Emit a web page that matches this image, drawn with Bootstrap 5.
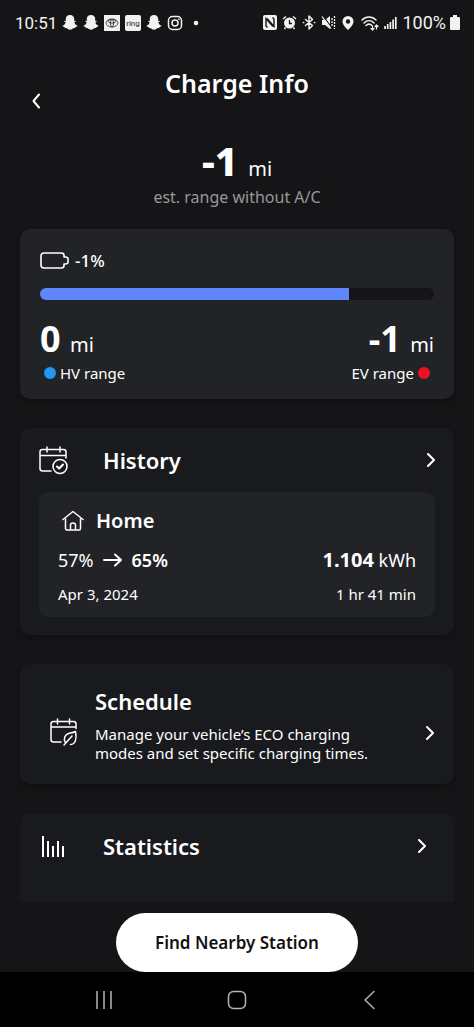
<!DOCTYPE html>
<html lang="en">
<head>
<meta charset="utf-8">
<meta name="viewport" content="width=device-width, initial-scale=1">
<title>Charge Info</title>
<link rel="stylesheet" href="https://cdn.jsdelivr.net/npm/bootstrap@5.3.0/dist/css/bootstrap.min.css">
<style>
  body { background: #151517; color: #fff; font-family: "Noto Sans", "Open Sans", sans-serif; font-size: 16px; line-height: 24px; }
  svg { display: block; flex: none; }
  .line { fill: none; stroke: currentColor; stroke-width: 2; stroke-linecap: round; stroke-linejoin: round; }
  .status-bar { height: 45px; padding: 0 14px 0 15px; font-family: Roboto, sans-serif; font-size: 18px; color: #f2f2f2; }
  .status-left { gap: 5px; font-size: 17px; }
  .status-right { gap: 5px; }
  .page-head { display: grid; grid-template-columns: 40px 1fr 40px; padding: 0 16px; height: 76px; }
  .page-head h1 { font-size: 25px; line-height: 36px; font-weight: 600; padding-top: 20px; }
  .back-btn { height: 40px; margin-top: 36px; }
  .range-total { font-size: 40px; line-height: 48px; font-weight: 800; margin-top: 16px; }
  .range-value { font-size: 36px; line-height: 45px; font-weight: 700; }
  .unit { font-size: 20px; line-height: 20px; font-weight: 400; }
  .sub-text { font-size: 16px; line-height: 24px; color: #98989b; }
  .panel { border-radius: 10px; background: #191a1d; box-shadow: 0 3px 5px #101012; }
  .panel-light { background: #222326; }
  .range-panel { padding: 20px 20px 14px; margin-top: 20px; }
  .charge-pct { font-size: 17px; font-weight: 500; line-height: 23px; gap: 6px; }
  .charge-bar { --bs-progress-bg: #151517; --bs-progress-bar-bg: #5f86fb; height: 12px; border-radius: 6px; margin: 16px 0; }
  .dot { width: 12px; height: 12px; border-radius: 50%; flex: none; }
  .dot-hv { background: #2196f3; }
  .dot-ev { background: #ed1021; }
  .body-text { font-size: 15px; }
  .history-panel { padding: 0 19px 18px; }
  .panel-head { height: 64px; color: #fff; }
  .panel-title { font-size: 22px; line-height: 30px; font-weight: 600; }
  .icon-col { width: 64px; }
  .session { border-radius: 10px; padding: 12px 19px 11px; }
  .session-name { font-size: 20px; font-weight: 600; height: 34px; gap: 12px; }
  .session-data { height: 44px; font-size: 18px; }
  .energy { font-size: 20px; }
  .schedule-panel { padding: 22px 20px 21px 30px; }
  .schedule-panel .icon-col { width: 45px; }
  .schedule-text { line-height: 19px; margin-top: 9px; }
  .stats-panel { padding: 0 28px 23px 21px; border-radius: 10px 10px 0 0; box-shadow: none; }
  .stats-panel .panel-head { height: 66px; }
  .stats-panel .icon-col { width: 62px; }
  .stack { gap: 29px; padding: 0 20px; }
  .find-btn { --bs-btn-color: #111; --bs-btn-bg: #fff; --bs-btn-hover-bg: #e6e6e6; --bs-btn-hover-color: #111; font-size: 17px; font-weight: 600; line-height: 25px; padding: 16px 38px; }
  .system-nav { height: 55px; background: #000; color: #b5b5b5; gap: 89px; }
  .system-nav .btn { color: inherit; }
</style>
</head>
<body>
<div class="d-flex flex-column min-vh-100">

  <div class="status-bar d-flex align-items-center justify-content-between">
    <div class="status-left d-flex align-items-center">
      <span>10:51</span>
      <svg width="16" height="17" viewBox="0 0 16 17" fill="currentColor"><path id="ghost" d="M8 1c3 0 4.200 2 4.200 4v2l1.300-.3c.6.6-.3 1.200-1.200 1.700.5 1.600 1.600 2.700 3.200 3.200.1.900-1 1.100-1.900 1.300l-.5 1.200c-1.200-.3-2 .1-2.900.8-1.400 1.100-3 1.100-4.400 0-.9-.7-1.700-1.100-2.900-.8l-.5-1.200c-.9-.2-2-.4-1.900-1.300 1.600-.5 2.700-1.600 3.200-3.200C2.800 7.900 1.900 7.300 2.500 6.700L3.800 7V5c0-2 1.200-4 4.200-4z"/></svg>
      <svg width="16" height="17" viewBox="0 0 16 17" fill="currentColor"><use href="#ghost"/></svg>
      <svg width="16" height="16" viewBox="0 0 16 16"><path fill="#f2f2f2" d="M0 0h16v16H0z"/><g fill="none" stroke="#333" stroke-width=".9"><ellipse cx="8" cy="8" rx="6" ry="4"/><ellipse cx="8" cy="6.300" rx="4" ry="1.800"/><ellipse cx="8" cy="8" rx="1.500" ry="4"/></g></svg>
      <svg width="16" height="16" viewBox="0 0 16 16"><rect width="16" height="16" rx="2" fill="#f2f2f2"/><text x="8" y="11" text-anchor="middle" font-family="Roboto, sans-serif" font-size="8" fill="#222">ring</text></svg>
      <svg width="16" height="17" viewBox="0 0 16 17" fill="currentColor"><use href="#ghost"/></svg>
      <svg width="16" height="16" viewBox="0 0 16 16" class="line"><rect x="1.500" y="1.500" width="13" height="13" rx="4" stroke-width="1.500"/><circle cx="8" cy="8" r="3" stroke-width="1.500"/><circle cx="11.800" cy="4.200" r=".4" stroke-width="1"/></svg>
      <svg width="16" height="16" viewBox="0 0 16 16" fill="currentColor"><circle cx="8" cy="8" r="2.300"/></svg>
    </div>
    <div class="status-right d-flex align-items-center">
      <svg width="14" height="15" viewBox="0 0 14 15"><rect width="14" height="15" rx="2" fill="#f2f2f2"/><path d="M4.500 12.500 3 11V3.500l7 8M9.500 2.500 11 4v7.500l-7-8" fill="none" stroke="#151517" stroke-width="1.400"/></svg>
      <svg width="15" height="15" viewBox="0 0 15 15"><circle cx="7.500" cy="8" r="5.500" fill="#f2f2f2"/><path d="M1 4l3-2.500M14 4l-3-2.500M3.500 12.500 2.500 14M11.500 12.500l1 1.500" stroke="#f2f2f2" stroke-width="1.500"/><path d="M7.500 5v3.500H10" fill="none" stroke="#151517" stroke-width="1.300"/></svg>
      <svg width="14" height="15" viewBox="0 0 14 15" class="line"><path stroke-width="1.500" d="M3.500 4.500l7 6L7 14V1l3.500 3.500-7 6"/><path stroke-width="1.700" d="M1.500 7.500h.1M12.500 7.500h.1"/></svg>
      <svg width="15" height="15" viewBox="0 0 15 15"><path d="M1 5h3l5-4v13l-5-4H1z" fill="#f2f2f2"/><path d="M2 .5l8.500 12" stroke="#151517" stroke-width="1.200"/><path d="M1 1.500l9 12" stroke="#f2f2f2" stroke-width="1.200"/><path d="M11 3v9M13.500 1v13" stroke="#f2f2f2" stroke-width="1.300" stroke-dasharray="2 1"/></svg>
      <svg width="14" height="16" viewBox="0 0 14 16"><path fill="#f2f2f2" fill-rule="evenodd" d="M7 1a5.500 5.500 0 0 1 5.500 5.500C12.500 10.500 7 15 7 15S1.500 10.500 1.500 6.500A5.500 5.500 0 0 1 7 1zm0 3.300a2.200 2.200 0 1 0 0 4.400 2.200 2.200 0 0 0 0-4.400z"/></svg>
      <svg width="19" height="16" viewBox="0 0 19 16" class="line"><g stroke-width="1.500"><path d="M2 5c4-4 10-4 14 0M4 8c3-3 7-3 10 0M6 10.500c2-1.800 4-1.800 6 0"/><path stroke-width="1.200" d="M12.500 11v4m-1.500-1.500 1.500 1.500 1.500-1.500M16.500 14v-4M15 11.500l1.500-1.500 1.500 1.500"/></g></svg>
      <svg width="13" height="15" viewBox="0 0 13 15" stroke="#f2f2f2" stroke-width="1.700"><path d="M1 14v-3M3.700 14V9M6.400 14V7M9.100 14V4.500M11.800 14V2"/></svg>
      <span class="d-flex align-items-center"><span>100%</span><svg class="ms-1" width="10" height="15" viewBox="0 0 10 15" fill="#f2f2f2"><path d="M3 0h4v2h2q1 0 1 1v11q0 1-1 1H1q-1 0-1-1V3q0-1 1-1h2z"/></svg></span>
    </div>
  </div>

  <header class="page-head">
    <button type="button" class="back-btn btn border-0 p-0 text-white d-flex justify-content-center align-items-center" aria-label="Back"><svg width="12" height="18" viewBox="0 0 12 18" class="line"><path d="M9 2.500 3.500 9 9 15.500"/></svg></button>
    <h1 class="m-0 text-center">Charge Info</h1>
  </header>

  <main class="flex-grow-1">
    <section class="text-center">
      <div class="range-total">-1 <span class="unit">mi</span></div>
      <div class="sub-text">est. range without A/C</div>
    </section>

    <div class="stack d-flex flex-column">
      <section class="panel panel-light range-panel">
        <div class="charge-pct d-flex align-items-center">
          <svg width="29" height="17" viewBox="0 0 29 17" class="line"><path stroke-width="1.600" d="M4 1h17.500q2.500 0 2.500 2.500v1.500h1.500q2.500 0 2.500 2v3q0 2-2.500 2H24v1.500q0 2.500-2.500 2.500H4q-3 0-3-3V4q0-3 3-3z"/></svg>
          <span>-1%</span>
        </div>
        <div class="charge-bar progress" role="progressbar" aria-label="Charge" aria-valuenow="78" aria-valuemin="0" aria-valuemax="100"><div class="progress-bar" style="width:78.400%"></div></div>
        <div class="d-flex justify-content-between">
          <div>
            <div class="range-value">0 <span class="unit">mi</span></div>
            <div class="body-text d-flex align-items-center ps-1 gap-1"><span class="dot dot-hv"></span>HV range</div>
          </div>
          <div class="text-end">
            <div class="range-value">-1 <span class="unit">mi</span></div>
            <div class="body-text d-flex align-items-center justify-content-end pe-1 gap-1">EV range<span class="dot dot-ev"></span></div>
          </div>
        </div>
      </section>

      <section class="panel history-panel">
        <a href="#history" class="panel-head d-flex align-items-center text-decoration-none">
          <span class="icon-col"><svg width="29" height="29" viewBox="0 0 29 29" class="line"><g stroke-width="1.500"><path d="M12 25H3.500Q1 25 1 22.500V6q0-2.500 2.500-2.500h21Q27 3.500 27 6v6M1 9.500h26M8 1v5M21 1v5"/><circle cx="21" cy="20.500" r="7"/><path stroke-width="2" d="M18 20.500l2.200 2 3.800-4"/></g></svg></span>
          <h2 class="panel-title m-0 flex-grow-1">History</h2>
          <svg width="10" height="18" viewBox="0 0 10 18" class="line"><path d="M3 3 9 9l-6 6"/></svg>
        </a>
        <div class="session panel-light">
          <div class="session-name d-flex align-items-center"><svg class="ms-1" width="22" height="22" viewBox="0 0 22 22" class="line"><g fill="none" stroke="currentColor" stroke-width="1.500" stroke-linecap="round" stroke-linejoin="round"><path d="M1 9.500 11 1.500l10 8M3.500 9v9.500q0 1.500 1.500 1.500h12q1.500 0 1.500-1.500V9M8.500 20v-5q0-2 2.500-2t2.500 2v5"/></g></svg>Home</div>
          <div class="session-data d-flex align-items-center justify-content-between">
            <span class="d-flex align-items-center">57%<svg class="mx-2" width="22" height="18" viewBox="0 0 22 18"><path class="line" d="M2 9h17M13 3.500 19 9l-6 5.500"/></svg><span class="fw-semibold">65%</span></span>
            <span><span class="energy fw-bold">1.104</span> kWh</span>
          </div>
          <div class="body-text d-flex justify-content-between"><span>Apr 3, 2024</span><span>1 hr 41 min</span></div>
        </div>
      </section>

      <a href="#schedule" class="panel schedule-panel d-flex align-items-center text-decoration-none text-white">
        <span class="icon-col mt-3"><svg width="28" height="29" viewBox="0 0 28 29" class="line"><g stroke-width="1.500"><path d="M11 24H3.500Q1 24 1 21.500V6q0-2.500 2.500-2.500h20Q26 3.500 26 6v4.500M1 9h25M7.500 1v5M19.500 1v5"/><path d="M14 27l8-9M15.500 25c-2.500-4-1-9 5-10 3-.5 5-1.500 5-1.500 1.500 7 0 13-5 13"/></g></svg></span>
        <span class="flex-grow-1">
          <span class="panel-title d-block">Schedule</span>
          <span class="schedule-text body-text d-block">Manage your vehicle’s ECO charging<br>modes and set specific charging times.</span>
        </span>
        <svg class="mt-3" width="10" height="18" viewBox="0 0 10 18"><path class="line" d="M3 3 9 9l-6 6"/></svg>
      </a>

      <section class="panel stats-panel">
        <a href="#statistics" class="panel-head d-flex align-items-center text-decoration-none">
          <span class="icon-col"><svg width="24" height="24" viewBox="0 0 24 24" stroke="currentColor" stroke-width="2"><path d="M2 2v21M7 7v16M12 12v11M17 7v16M22 12v11"/></svg></span>
          <h2 class="panel-title m-0 flex-grow-1">Statistics</h2>
          <svg width="10" height="18" viewBox="0 0 10 18" class="line"><path d="M3 3 9 9l-6 6"/></svg>
        </a>
      </section>
    </div>
  </main>

  <div class="text-center d-flex justify-content-center">
    <button type="button" class="find-btn btn rounded-pill">Find Nearby Station</button>
  </div>

  <nav class="system-nav d-flex align-items-center justify-content-center" aria-label="System">
    <button type="button" class="btn border-0" aria-label="Recent apps"><svg width="20" height="20" viewBox="0 0 20 20" stroke="currentColor" stroke-width="1.500"><path d="M3 1v18M10 1v18M17 1v18"/></svg></button>
    <button type="button" class="btn border-0" aria-label="Home"><svg width="20" height="20" viewBox="0 0 20 20" class="line"><rect x="1.500" y="1.500" width="17" height="17" rx="5" stroke-width="1.500"/></svg></button>
    <button type="button" class="btn border-0" aria-label="Back"><svg width="20" height="20" viewBox="0 0 20 20" class="line"><path stroke-width="1.500" d="M14 1.500 5 10l9 8.500"/></svg></button>
  </nav>
</div>
<script src="https://cdn.jsdelivr.net/npm/bootstrap@5.3.0/dist/js/bootstrap.bundle.min.js"></script>
</body>
</html>
